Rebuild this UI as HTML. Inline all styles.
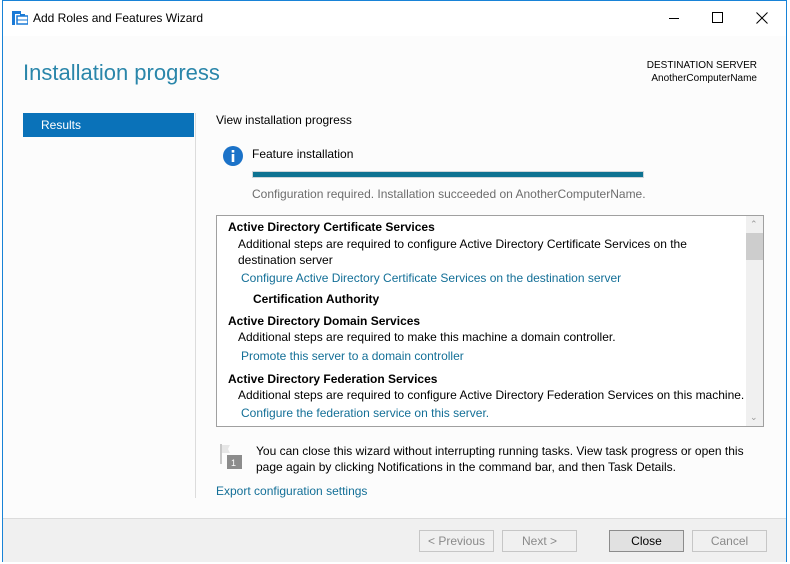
<!DOCTYPE html>
<html><head><style>
*{margin:0;padding:0;box-sizing:border-box}
body{width:790px;height:564px;background:#fff;font-family:"Liberation Sans",sans-serif;font-size:12px;color:#000;position:relative;overflow:hidden}
.win{position:absolute;left:2px;top:0;width:785px;height:562px;border:1px solid #1883d7;background:#fcfcfc}
.title{position:absolute;left:0;top:0;width:100%;height:35px;background:#fff}
.abs{position:absolute;white-space:nowrap}
.link{color:#136f97}
.footer{position:absolute;left:0;top:517px;width:100%;height:44px;background:#f0f0f0;border-top:1px solid #dcdcdc}
.btn{position:absolute;top:11px;height:22px;border:1px solid #c6c6c6;background:#f0f0f0;color:#8a8a8a;text-align:center;line-height:20px;font-size:12px}
</style></head><body>
<div class="win">
 <div class="title">
  <svg class="abs" style="left:9px;top:10px" width="16" height="14"><rect x="0" y="0" width="3" height="14" fill="#1a7ad6"/><rect x="0" y="0" width="9" height="3" fill="#1a7ad6"/><rect x="5" y="5" width="11" height="8" fill="#fff" stroke="#1a7ad6" stroke-width="1.5"/><rect x="8" y="3" width="5" height="2" fill="#1a7ad6"/><line x1="5" y1="9" x2="16" y2="9" stroke="#1a7ad6"/></svg>
  <div class="abs" style="left:30px;top:10px;font-size:12px">Add Roles and Features Wizard</div>
  <div class="abs" style="left:666px;top:17px;width:10px;height:1px;background:#000"></div>
  <div class="abs" style="left:709px;top:11px;width:11px;height:11px;border:1px solid #000"></div>
  <svg class="abs" style="left:753px;top:11px" width="12" height="12"><path d="M0.5 0.5L11.5 11.5M11.5 0.5L0.5 11.5" stroke="#000" stroke-width="1"/></svg>
 </div>
 <div class="abs" style="left:20px;top:59px;font-size:22px;color:#2a86aa;font-weight:300">Installation progress</div>
 <div class="abs" style="left:600px;top:58px;width:154px;text-align:right;font-size:10px;line-height:13px">DESTINATION SERVER<br>AnotherComputerName</div>
 <div class="abs" style="left:20px;top:112px;width:171px;height:24px;background:#0a72b9;color:#fff;padding:5px 0 0 18px">Results</div>
 <div class="abs" style="left:192px;top:112px;width:1px;height:385px;background:#dcdcdc"></div>
 <div class="abs" style="left:213px;top:112px">View installation progress</div>
 <svg class="abs" style="left:220px;top:145px" width="20" height="20"><circle cx="10" cy="10" r="10" fill="#1b72c8"/><rect x="8.7" y="8" width="2.6" height="8" fill="#fff"/><rect x="8.7" y="4" width="2.6" height="2.6" fill="#fff"/></svg>
 <div class="abs" style="left:249px;top:146px">Feature installation</div>
 <div class="abs" style="left:249px;top:170px;width:392px;height:7px;background:#0e7392;border:1px solid #cfd6da"></div>
 <div class="abs" style="left:249px;top:186px;color:#6d6d6d">Configuration required. Installation succeeded on AnotherComputerName.</div>
 <div class="abs" style="left:213px;top:214px;width:548px;height:212px;border:1px solid #a0a0a0;background:#fff;overflow:hidden">
  <div class="abs" style="left:529px;top:0;width:17px;height:210px;background:#f0f0f0"></div>
  <div class="abs" style="left:529px;top:17px;width:17px;height:27px;background:#cdcdcd"></div>
  <div class="abs" style="left:533px;top:3px;font-size:9px;color:#999">&#8963;</div>
  <div class="abs" style="left:533px;top:196px;font-size:9px;color:#999">&#8964;</div>
  <div class="abs" style="left:11px;top:4px;font-weight:bold">Active Directory Certificate Services</div>
  <div class="abs" style="left:21px;top:20px;line-height:16px">Additional steps are required to configure Active Directory Certificate Services on the<br>destination server</div>
  <div class="abs link" style="left:24px;top:55px">Configure Active Directory Certificate Services on the destination server</div>
  <div class="abs" style="left:36px;top:76px;font-weight:bold">Certification Authority</div>
  <div class="abs" style="left:11px;top:98px;font-weight:bold">Active Directory Domain Services</div>
  <div class="abs" style="left:21px;top:114px">Additional steps are required to make this machine a domain controller.</div>
  <div class="abs link" style="left:24px;top:133px">Promote this server to a domain controller</div>
  <div class="abs" style="left:11px;top:156px;font-weight:bold">Active Directory Federation Services</div>
  <div class="abs" style="left:21px;top:172px">Additional steps are required to configure Active Directory Federation Services on this machine.</div>
  <div class="abs link" style="left:24px;top:190px">Configure the federation service on this server.</div>
 </div>
 <svg class="abs" style="left:216px;top:443px" width="24" height="26"><path d="M2 0L2 20" stroke="#c8c8c8" stroke-width="2"/><path d="M3 1L11 1L9 5L11 9L3 9Z" fill="#e6e6e6"/><rect x="8" y="11" width="15" height="14" fill="#8c8c8c"/><text x="12" y="22" font-size="9" fill="#fff" font-family="Liberation Sans">1</text></svg>
 <div class="abs" style="left:253px;top:442px;line-height:16px">You can close this wizard without interrupting running tasks. View task progress or open this<br>page again by clicking Notifications in the command bar, and then Task Details.</div>
 <div class="abs link" style="left:213px;top:483px">Export configuration settings</div>
 <div class="footer">
  <div class="btn" style="left:416px;width:75px">&lt; Previous</div>
  <div class="btn" style="left:499px;width:75px">Next &gt;</div>
  <div class="btn" style="left:606px;width:75px;border-color:#8c8c8c;background:#e1e1e1;color:#000">Close</div>
  <div class="btn" style="left:689px;width:75px">Cancel</div>
 </div>
</div>
</body></html>
